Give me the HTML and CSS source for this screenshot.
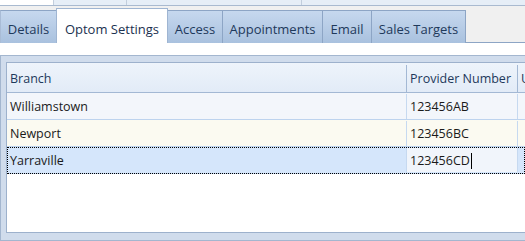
FILE: index.html
```html
<!DOCTYPE html>
<html>
<head>
<meta charset="utf-8">
<link rel="stylesheet" href="styles.css">
</head>
<body>
<div class="window">
  <div class="topstrip">
    <div class="tcell c1"></div>
    <div class="tcell c2"></div>
    <div class="tcell c3"></div>
    <div class="tcell c4"></div>
  </div>
  <div class="tabs">
    <div class="tab w-details">Details</div>
    <div class="tab active w-optom">Optom Settings</div>
    <div class="tab w-access">Access</div>
    <div class="tab w-appt">Appointments</div>
    <div class="tab w-email">Email</div>
    <div class="tab w-sales">Sales Targets</div>
    <div class="tabfill"></div>
  </div>
  <div class="page">
    <div class="panel">
      <div class="grid">
        <div class="row head">
          <div class="cell col-branch">Branch</div>
          <div class="cell col-prov">Provider Number</div>
          <div class="cell col-u">U</div>
        </div>
        <div class="row odd">
          <div class="cell col-branch">Williamstown</div>
          <div class="cell col-prov">123456AB</div>
          <div class="cell col-u"></div>
        </div>
        <div class="row even">
          <div class="cell col-branch">Newport</div>
          <div class="cell col-prov">123456BC</div>
          <div class="cell col-u"></div>
        </div>
        <div class="row sel">
          <div class="cell col-branch">Yarraville</div>
          <div class="cell col-prov edit">123456CD<span class="caret"></span></div>
          <div class="cell col-u"></div>
        </div>
        <div class="empty"></div>
      </div>
    </div>
  </div>
</div>
</body>
</html>
```

FILE: styles.css
```css
html, body {
  margin: 0;
  padding: 0;
}
body {
  width: 525px;
  height: 241px;
  overflow: hidden;
  background: #f0f0f0;
  font-family: "Open Sans", "Noto Sans", "DejaVu Sans", sans-serif;
  font-size: 12.5px;
}
.window {
  width: 525px;
  height: 241px;
  display: flex;
  flex-direction: column;
}
.topstrip {
  height: 5px;
  display: flex;
  background: #dfe8f3;
  border-bottom: 1px solid #a9bad0;
  flex: none;
}
.tcell {
  border-right: 1px solid #c2cedd;
  height: 5px;
  background: #e6eef7;
}
.c1 { width: 53px; background: #ffffff; }
.c2 { width: 72px; }
.c3 { width: 174px; }
.c4 { flex: 1; border-right: none; }
.tabs {
  height: 37px;
  display: flex;
  align-items: flex-end;
  flex: none;
  background: #f0f0f0;
}
.tab {
  box-sizing: border-box;
  height: 33px;
  display: flex;
  align-items: center;
  justify-content: center;
  padding-top: 3px;
  color: #1e395b;
  background: linear-gradient(#c6d8ee, #a9c1de);
  border: 1px solid #8da5c5;
  border-bottom: none;
  margin-left: -1px;
  font-size: 13px;
  flex: none;
}
.tab:first-child { margin-left: 0; border-left: 1px solid #a9bcd6; }
.tab.active {
  height: 35px;
  padding-top: 5px;
  background: #ffffff;
  color: #1b3150;
  border-color: #9fb5d2;
  position: relative;
  z-index: 1;
}
.w-details { width: 57px; }
.w-optom { width: 112px; }
.w-access { width: 56px; }
.w-appt { width: 101px; }
.w-email { width: 50px; }
.w-sales { width: 95px; }
.tabfill {
  flex: 1;
  height: 33px;
  box-sizing: border-box;
  border-bottom: 1px solid #8da5c5;
  border-left: 1px solid #8da5c5;
  margin-left: -1px;
}
.page {
  flex: 1;
  background: #ffffff;
  padding-top: 12px;
  display: flex;
  flex-direction: column;
}
.panel {
  flex: 1;
  box-sizing: border-box;
  background: #d0dcec;
  border: 1px solid #a3b6cf;
  border-right: none;
  padding: 6px 0 7px 5px;
  display: flex;
}
.grid {
  flex: 1;
  min-width: 0;
  background: #ffffff;
  border: 1px solid #9db1cc;
  border-right: none;
  display: flex;
  flex-direction: column;
  overflow: hidden;
}
.row {
  display: flex;
  height: 27px;
  box-sizing: border-box;
  border-bottom: 1px solid #bdd3ee;
  flex: none;
  padding-top: 1px;
}
.row.head {
  height: 30px;
  padding-top: 2px;
  background: linear-gradient(#eef4fb, #e2ebf7);
  border-bottom: 1px solid #a3b8d4;
  color: #1e395b;
}
.cell {
  box-sizing: border-box;
  flex: none;
  display: flex;
  align-items: center;
  padding-left: 3px;
  border-right: 1px solid #c6d9f0;
  color: #1a1a1a;
  white-space: nowrap;
  overflow: hidden;
}
.head .cell {
  color: #1e395b;
  border-right: 1px solid #a3b8d4;
}
.col-branch { width: 400px; }
.col-prov { width: 111px; }
.col-u { width: 60px; }
.row.odd { background: #f3f6fb; }
.row.even { background: #fbfaf1; }
.row.sel {
  background: #d5e6fb;
  outline: 1px dotted #000000;
  outline-offset: -1px;
  padding-top: 0;
}
.cell.edit {
  background: #f1f5fb;
  margin: 1px 0;
  padding-top: 1px;
}
.caret {
  display: inline-block;
  width: 1px;
  height: 16px;
  background: #000000;
  margin-left: 1px;
}
.empty {
  flex: 1;
}
```
